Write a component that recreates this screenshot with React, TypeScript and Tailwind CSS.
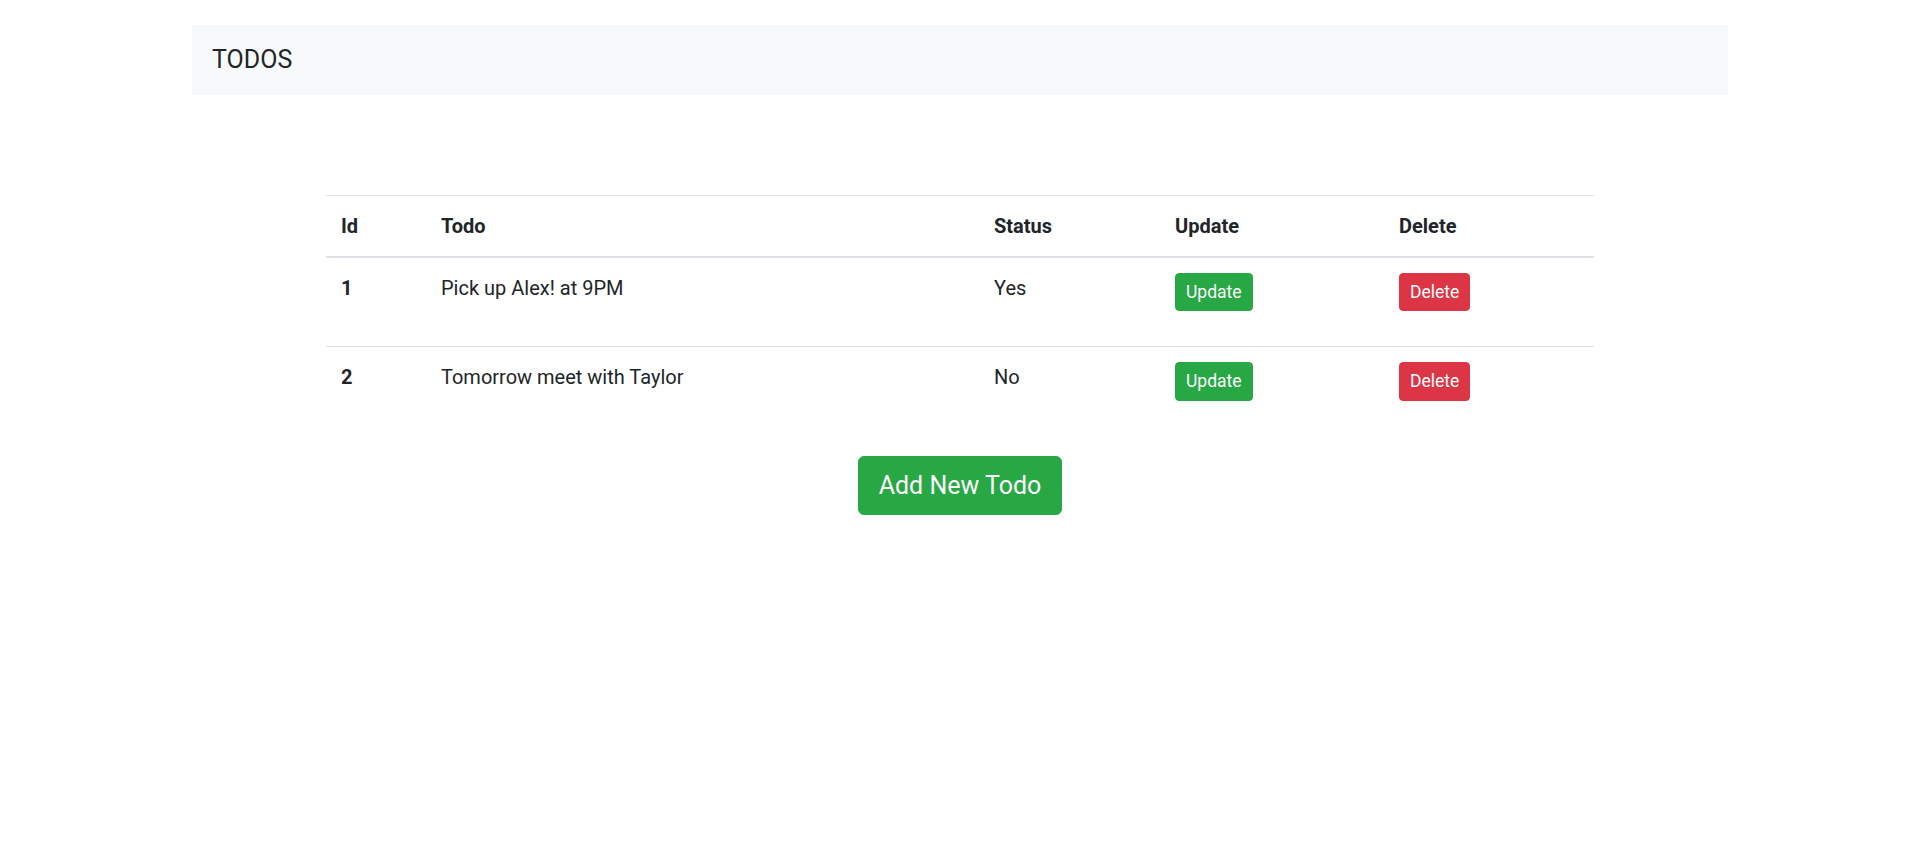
import React from "react";

type Todo = { id: number; text: string; status: string };

const todos: Todo[] = [
  { id: 1, text: "Pick up Alex! at 9PM", status: "Yes" },
  { id: 2, text: "Tomorrow meet with Taylor", status: "No" },
];

export default function App() {
  return (
    <div className="min-h-[853px] bg-white pt-[25px] font-['Roboto',sans-serif] text-[#212529]">
      <nav className="ml-[192px] flex h-[70px] w-[1536px] items-center bg-[#f8f9fa] px-[20px]">
        <span className="text-[25px] leading-[37.5px] text-[#212529]">TODOS</span>
      </nav>

      <div className="ml-[326px] mt-[100px] w-[1268px]">
        <table className="mb-[20px] w-full table-fixed border-collapse text-left text-[20px] leading-[30px]">
          <colgroup>
            <col className="w-[100px]" />
            <col className="w-[553px]" />
            <col className="w-[181px]" />
            <col className="w-[224px]" />
            <col className="w-[210px]" />
          </colgroup>
          <thead>
            <tr>
              {["Id", "Todo", "Status", "Update", "Delete"].map((h) => (
                <th
                  key={h}
                  className="border-t border-b-2 border-t-[#dee2e6] border-b-[#dee2e6] p-[15px] align-bottom font-bold"
                >
                  {h}
                </th>
              ))}
            </tr>
          </thead>
          <tbody>
            {todos.map((t) => (
              <tr key={t.id}>
                <th className="border-t border-[#dee2e6] p-[15px] align-top font-bold">{t.id}</th>
                <td className="border-t border-[#dee2e6] p-[15px] align-top">{t.text}</td>
                <td className="border-t border-[#dee2e6] p-[15px] align-top">{t.status}</td>
                <td className="border-t border-[#dee2e6] p-[15px] align-top">
                  <div className="mb-[20px]">
                    <button className="rounded-[4px] border border-[#28a745] bg-[#28a745] px-[10px] py-[5px] text-[17.5px] leading-[26.25px] text-white">
                      Update
                    </button>
                  </div>
                </td>
                <td className="border-t border-[#dee2e6] p-[15px] align-top">
                  <div className="mb-[20px]">
                    <button className="rounded-[4px] border border-[#dc3545] bg-[#dc3545] px-[10px] py-[5px] text-[17.5px] leading-[26.25px] text-white">
                      Delete
                    </button>
                  </div>
                </td>
              </tr>
            ))}
          </tbody>
        </table>

        <div className="flex justify-center">
          <button className="rounded-[6px] border border-[#28a745] bg-[#28a745] px-[20px] py-[10px] text-[25px] leading-[37.5px] text-white">
            Add New Todo
          </button>
        </div>
      </div>
    </div>
  );
}
